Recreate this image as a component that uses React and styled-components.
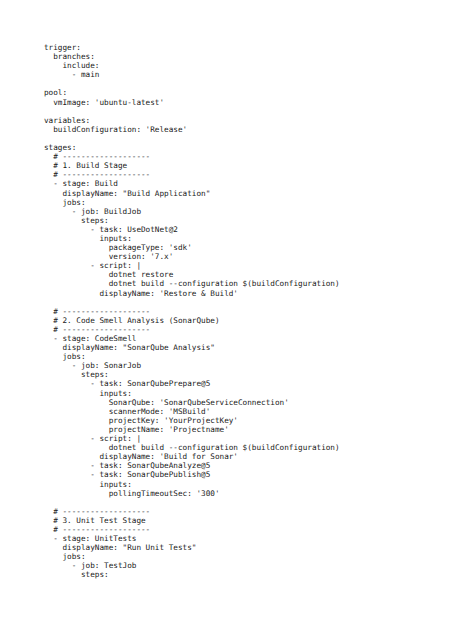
import React from "react";
import styled, { createGlobalStyle } from "styled-components";

const Global = createGlobalStyle`
  html, body { margin: 0; padding: 0; background: #ffffff; }
`;

const Page = styled.div`
  width: 474px;
  min-height: 632px;
  box-sizing: border-box;
  padding: 43px 0 0 44px;
  background: #ffffff;
`;

const Code = styled.pre`
  margin: 0;
  font-family: "DejaVu Sans Mono", monospace;
  font-size: 7.68px;
  line-height: 9.1px;
  color: #1a1a1a;
  white-space: pre;
`;

const Line = styled.div`
  height: 9.1px;
`;

const source = `trigger:
  branches:
    include:
      - main

pool:
  vmImage: 'ubuntu-latest'

variables:
  buildConfiguration: 'Release'

stages:
  # -------------------
  # 1. Build Stage
  # -------------------
  - stage: Build
    displayName: "Build Application"
    jobs:
      - job: BuildJob
        steps:
          - task: UseDotNet@2
            inputs:
              packageType: 'sdk'
              version: '7.x'
          - script: |
              dotnet restore
              dotnet build --configuration $(buildConfiguration)
            displayName: 'Restore & Build'

  # -------------------
  # 2. Code Smell Analysis (SonarQube)
  # -------------------
  - stage: CodeSmell
    displayName: "SonarQube Analysis"
    jobs:
      - job: SonarJob
        steps:
          - task: SonarQubePrepare@5
            inputs:
              SonarQube: 'SonarQubeServiceConnection'
              scannerMode: 'MSBuild'
              projectKey: 'YourProjectKey'
              projectName: 'Projectname'
          - script: |
              dotnet build --configuration $(buildConfiguration)
            displayName: 'Build for Sonar'
          - task: SonarQubeAnalyze@5
          - task: SonarQubePublish@5
            inputs:
              pollingTimeoutSec: '300'

  # -------------------
  # 3. Unit Test Stage
  # -------------------
  - stage: UnitTests
    displayName: "Run Unit Tests"
    jobs:
      - job: TestJob
        steps:`;

export default function App() {
  const lines = source.split("\n");
  return (
    <>
      <Global />
      <Page>
        <Code>
          {lines.map((l, i) => (
            <Line key={i}>{l}</Line>
          ))}
        </Code>
      </Page>
    </>
  );
}
